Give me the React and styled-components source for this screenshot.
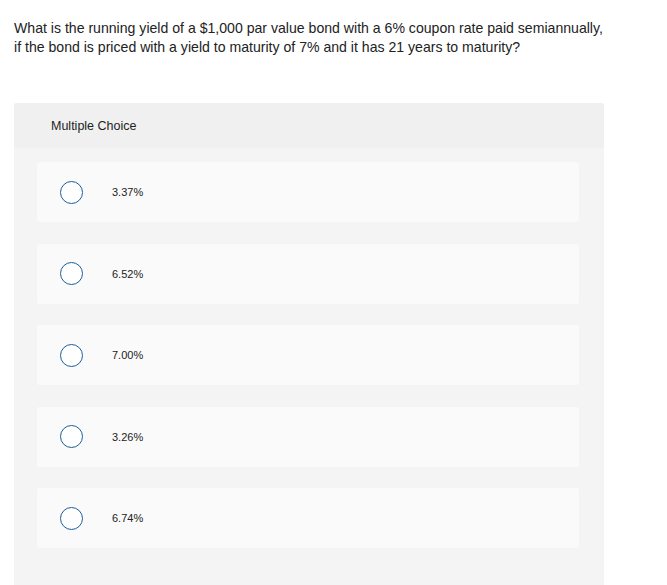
import React from 'react'
import styled, { createGlobalStyle } from 'styled-components'

const GlobalStyle = createGlobalStyle`
  body {
    margin: 0;
    background: #fff;
    font-family: "Liberation Sans", Arial, sans-serif;
    color: #222;
  }
`

const Page = styled.div`
  padding: 19px 0 0 14px;
  width: 590px;
`

const Question = styled.p`
  font-size: 14.1px;
  line-height: 19px;
  margin: 0 0 46px;
  color: #222;
  white-space: nowrap;
`

const Panel = styled.div`
  background: #f4f4f4;
  border-radius: 3px 3px 0 0;
  padding-bottom: 40px;
`

const PanelHeader = styled.div`
  background: #f0f0f0;
  border-radius: 3px 3px 0 0;
  height: 45px;
  display: flex;
  align-items: center;
  padding-left: 37px;
  font-size: 12.5px;
  color: #222;
`

const Options = styled.div`
  display: flex;
  flex-direction: column;
  gap: 21.5px;
  padding: 14px 25px 0 23px;
`

const Option = styled.label`
  display: flex;
  align-items: center;
  height: 60px;
  background: #fafafa;
  border-radius: 3px;
  padding-left: 23px;
  cursor: pointer;
`

const Radio = styled.span`
  width: 23px;
  height: 23px;
  border: 1.5px solid #1b5e9b;
  border-radius: 50%;
  background: #fff;
  box-sizing: border-box;
  flex: none;
`

const OptionText = styled.span`
  margin-left: 29px;
  font-size: 11px;
  color: #222;
`

const choices = ['3.37%', '6.52%', '7.00%', '3.26%', '6.74%']

export default function App() {
  return (
    <Page>
      <GlobalStyle />
      <Question>
        What is the running yield of a $1,000 par value bond with a 6% coupon rate paid semiannually,
        <br />
        if the bond is priced with a yield to maturity of 7% and it has 21 years to maturity?
      </Question>
      <Panel>
        <PanelHeader>Multiple Choice</PanelHeader>
        <Options>
          {choices.map(c => (
            <Option key={c}>
              <Radio />
              <OptionText>{c}</OptionText>
            </Option>
          ))}
        </Options>
      </Panel>
    </Page>
  )
}
